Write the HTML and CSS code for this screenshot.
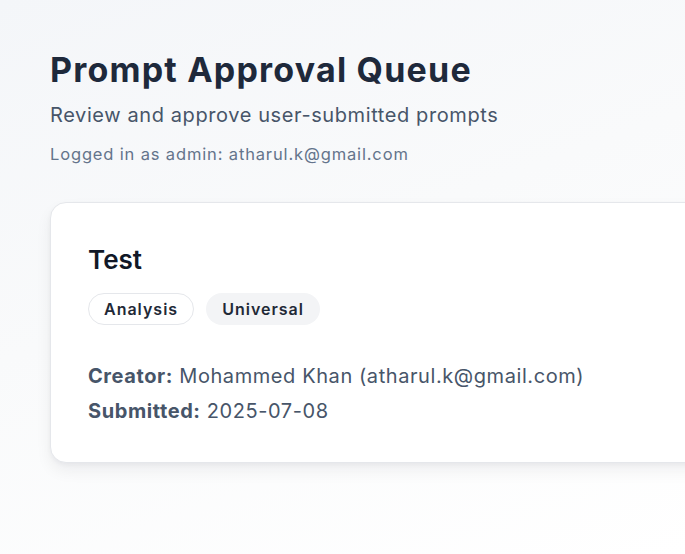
FILE: index.html
```html
<!DOCTYPE html>
<html lang="en">
<head>
<meta charset="utf-8">
<title>Prompt Approval Queue</title>
<link rel="stylesheet" href="styles.css">
</head>
<body>
<main class="page">
  <header class="head">
    <h1 class="title">Prompt Approval Queue</h1>
    <p class="subtitle">Review and approve user-submitted prompts</p>
    <p class="user">Logged in as admin: atharul.k@gmail.com</p>
  </header>
  <section class="card">
    <h2 class="card-title">Test</h2>
    <div class="tags">
      <span class="tag tag-outline">Analysis</span>
      <span class="tag tag-fill">Universal</span>
    </div>
    <div class="meta">
      <p class="meta-row"><strong>Creator:</strong> Mohammed Khan (atharul.k@gmail.com)</p>
      <p class="meta-row"><strong>Submitted:</strong> 2025-07-08</p>
    </div>
  </section>
</main>
</body>
</html>
```
FILE: styles.css
```css
html, body {
  margin: 0;
  padding: 0;
  overflow: hidden;
  height: 100%;
}
body {
  font-family: Inter, "Noto Sans", sans-serif;
  background: linear-gradient(160deg, #f4f6f9 0%, #f9fafb 45%, #ffffff 100%);
}
.page {
  padding: 50px 0 0 50px;
}
.head { margin: 0; }
.title {
  margin: 0;
  font-size: 34px;
  line-height: 40px;
  font-weight: 700;
  color: #1e293b;
  letter-spacing: 1.2px;
}
.subtitle {
  margin: 11px 0 0;
  font-size: 20px;
  line-height: 28px;
  color: #475569;
  letter-spacing: 0.6px;
}
.user {
  margin: 13px 0 0;
  font-size: 16.5px;
  line-height: 24px;
  color: #64748b;
  letter-spacing: 0.85px;
}
.card {
  margin-top: 36px;
  width: 700px;
  box-sizing: border-box;
  background: #ffffff;
  border: 1px solid #e5e7eb;
  border-radius: 16px;
  padding: 41px 37px 37px;
  box-shadow: 0 8px 16px rgba(15, 23, 42, 0.06), 0 2px 4px rgba(15, 23, 42, 0.04);
}
.card-title {
  margin: 0;
  font-size: 26px;
  line-height: 32px;
  font-weight: 600;
  color: #111827;
}
.tags {
  display: flex;
  gap: 12px;
  margin-top: 17px;
}
.tag {
  box-sizing: border-box;
  height: 32px;
  display: inline-flex;
  align-items: center;
  padding: 0 15px;
  border-radius: 16px;
  font-size: 16px;
  font-weight: 600;
  color: #1f2937;
  letter-spacing: 1px;
}
.tag-outline {
  border: 1px solid #e5e7eb;
  background: #ffffff;
}
.tag-fill {
  background: #f3f4f6;
  padding: 0 16px;
}
.meta {
  margin-top: 37px;
  display: flex;
  flex-direction: column;
  gap: 7px;
}
.meta-row {
  margin: 0;
  font-size: 20px;
  line-height: 28px;
  color: #475569;
  letter-spacing: 0.58px;
}
.meta-row strong {
  font-weight: 700;
}
```
